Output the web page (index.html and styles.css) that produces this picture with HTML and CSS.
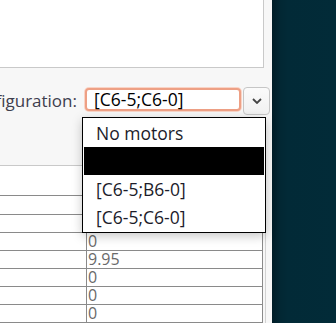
FILE: index.html
```html
<!DOCTYPE html>
<html>
<head>
<meta charset="utf-8">
<link rel="stylesheet" href="styles.css">
</head>
<body>
<div class="app">
  <div class="main">
    <div class="topbox"></div>
    <div class="config-row">
      <div class="label"><span>Motor configuration:</span></div>
      <div class="combo">
        <div class="field">[C6-5;C6-0]</div>
        <div class="button">
          <svg width="10" height="6" viewBox="0 0 10 6"><path d="M1 1 L5 5 L9 1" fill="none" stroke="#444" stroke-width="1.8"/></svg>
        </div>
      </div>
    </div>
    <div class="table">
      <div class="row first"><div class="c1"></div><div class="c2"></div></div>
      <div class="row"><div class="c1"></div><div class="c2"></div></div>
      <div class="row"><div class="c1"></div><div class="c2"></div></div>
      <div class="row"><div class="c1"></div><div class="c2">0</div></div>
      <div class="row"><div class="c1"></div><div class="c2">9.95</div></div>
      <div class="row"><div class="c1"></div><div class="c2">0</div></div>
      <div class="row"><div class="c1"></div><div class="c2">0</div></div>
      <div class="row"><div class="c1"></div><div class="c2">0</div></div>
    </div>
    <div class="popup">
      <div class="item">No motors</div>
      <div class="item selected"></div>
      <div class="item">[C6-5;B6-0]</div>
      <div class="item">[C6-5;C6-0]</div>
    </div>
  </div>
  <div class="side"></div>
</div>
</body>
</html>
```
FILE: styles.css
```css
html, body {
  margin: 0;
  padding: 0;
}
body {
  width: 336px;
  height: 323px;
  overflow: hidden;
  background: #f7f7f7;
  font-family: "Open Sans", "DejaVu Sans", sans-serif;
}
.app {
  display: flex;
  width: 336px;
  height: 323px;
}
.main {
  position: relative;
  width: 272px;
  flex: none;
  display: flex;
  flex-direction: column;
}
.topbox {
  width: 263px;
  height: 69px;
  background: #ffffff;
  border-right: 1px solid #c9c9c9;
  border-bottom: 1px solid #c9c9c9;
}
.config-row {
  margin-top: 19px;
  height: 28px;
  display: flex;
  align-items: flex-start;
}
.label {
  width: 77px;
  flex: none;
  display: flex;
  justify-content: flex-end;
  white-space: nowrap;
  font-size: 17px;
  line-height: 28px;
  color: #3e3e4e;
}
.label span {
  flex: none;
}
.combo {
  margin-left: 8px;
  display: flex;
  align-items: flex-start;
}
.field {
  margin-top: 1px;
  width: 145px;
  height: 19px;
  border: 2px solid #eea085;
  box-shadow: 0 0 0 1px #f9d4c6;
  border-radius: 4px;
  background: #ffffff;
  padding-left: 7px;
  font-size: 17.5px;
  line-height: 19px;
  color: #000000;
  white-space: nowrap;
}
.button {
  margin-left: 2px;
  width: 25px;
  height: 26px;
  border: 1px solid #c6c6c6;
  border-radius: 4px;
  background: linear-gradient(#fbfbfb, #f1f1f1);
  display: flex;
  align-items: center;
  justify-content: center;
}
.table {
  margin-top: 50px;
  width: 262px;
  background: #ffffff;
  border-top: 1px solid #c9c9c9;
  border-right: 1px solid #8a8a8a;
  box-shadow: 2px 0 0 #f7f7f7, 3px 0 0 #d2d2d2;
}
.row {
  display: flex;
  height: 17px;
  border-bottom: 1px solid #8a8a8a;
}
.row.first {
  height: 29px;
}
.row:nth-child(2) {
  height: 18px;
}
.c1 {
  width: 86px;
  border-right: 1px solid #8a8a8a;
}
.c2 {
  flex: 1;
  padding-left: 1px;
  font-size: 16px;
  line-height: 17px;
  color: #6a6a6a;
}
.popup {
  position: absolute;
  left: 82px;
  top: 117px;
  width: 180px;
  padding: 1px;
  border: 1px solid #000000;
  background: #ffffff;
  box-shadow: 0 3px 10px rgba(0, 0, 0, 0.22);
}
.item {
  height: 28px;
  padding-left: 12px;
  font-size: 17.5px;
  line-height: 28px;
  color: #1c1c2a;
  white-space: nowrap;
}
.item.selected {
  background: #000000;
}
.side {
  flex: 1;
  background: linear-gradient(to right, #011d27 0px, #022733 8px, #022a37 16px, #022b38 100%);
}
```
